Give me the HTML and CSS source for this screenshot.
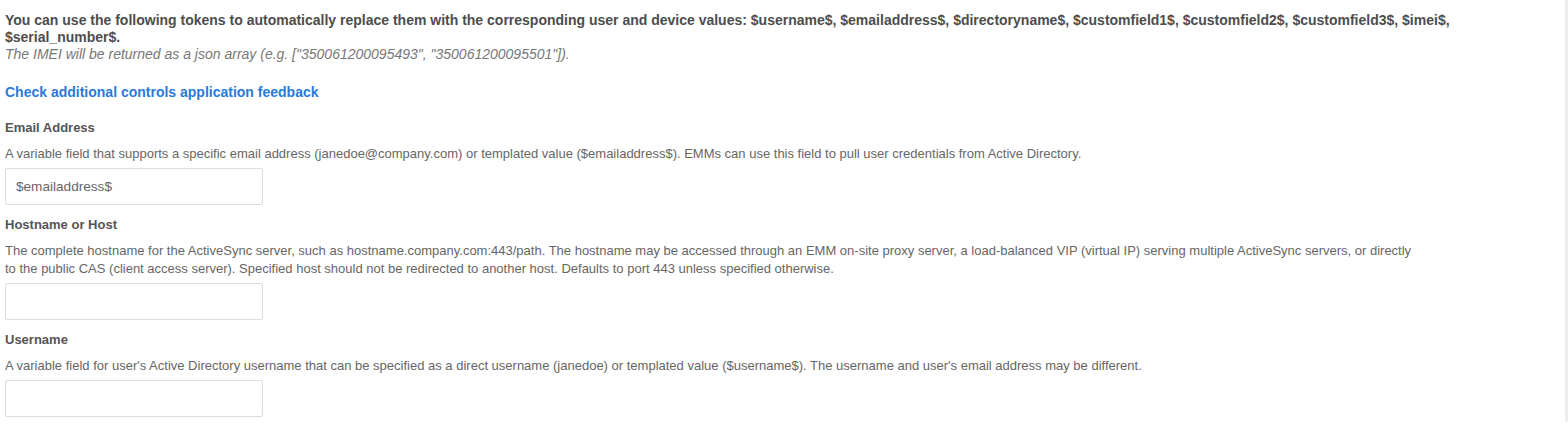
FILE: index.html
```html
<!DOCTYPE html>
<html lang="en">
<head>
<meta charset="utf-8">
<title>ActiveSync settings</title>
<link rel="stylesheet" href="styles.css">
</head>
<body>
<div class="page">
  <div class="intro">
    <p class="tokens">You can use the following tokens to automatically replace them with the corresponding user and device values: $username$, $emailaddress$, $directoryname$, $customfield1$, $customfield2$, $customfield3$, $imei$, $serial_number$.</p>
    <p class="note">The IMEI will be returned as a json array (e.g. ["350061200095493", "350061200095501"]).</p>
  </div>
  <a class="feedback" href="#">Check additional controls application feedback</a>

  <div class="field">
    <label class="field-label">Email Address</label>
    <p class="field-desc">A variable field that supports a specific email address (janedoe@company.com) or templated value ($emailaddress$). EMMs can use this field to pull user credentials from Active Directory.</p>
    <div class="input">$emailaddress$</div>
  </div>

  <div class="field">
    <label class="field-label">Hostname or Host</label>
    <p class="field-desc">The complete hostname for the ActiveSync server, such as hostname.company.com:443/path. The hostname may be accessed through an EMM on-site proxy server, a load-balanced VIP (virtual IP) serving multiple ActiveSync servers, or directly to the public CAS (client access server). Specified host should not be redirected to another host. Defaults to port 443 unless specified otherwise.</p>
    <div class="input"></div>
  </div>

  <div class="field">
    <label class="field-label">Username</label>
    <p class="field-desc">A variable field for user's Active Directory username that can be specified as a direct username (janedoe) or templated value ($username$). The username and user's email address may be different.</p>
    <div class="input"></div>
  </div>
</div>
</body>
</html>
```

FILE: styles.css
```css
html, body {
  margin: 0;
  padding: 0;
  background: #fff;
}

body {
  font-family: "Liberation Sans", Arial, sans-serif;
  color: #555;
  height: 425px;
  overflow: hidden;
}

.page {
  padding: 12px 5px 0 5px;
  border-right: 3px solid #ededed;
  height: 410px;
  box-sizing: content-box;
}

.intro {
  max-width: 1500px;
}

.tokens {
  margin: 0;
  font-size: 14px;
  font-weight: bold;
  line-height: 17px;
  color: #4d4d4d;
}

.note {
  margin: 0;
  font-size: 14px;
  font-style: italic;
  line-height: 17px;
  color: #777;
}

.feedback {
  display: block;
  margin-top: 21px;
  font-size: 14px;
  font-weight: bold;
  line-height: 17px;
  color: #2a7ad9;
  text-decoration: none;
}

.field {
  display: flex;
  flex-direction: column;
  align-items: flex-start;
  margin-top: 18px;
}

.field + .field {
  margin-top: 11px;
}

.field-label {
  font-size: 13px;
  font-weight: bold;
  line-height: 17px;
  color: #555;
}

.field-desc {
  margin: 9px 0 0 0;
  font-size: 13px;
  line-height: 18px;
  color: #666;
  max-width: 1408px;
}

.input {
  margin-top: 5px;
  width: 256px;
  height: 35px;
  border: 1px solid #dcdcdc;
  border-radius: 2px;
  box-sizing: content-box;
  font-size: 13.6px;
  line-height: 35px;
  text-indent: 10px;
  color: #666;
}
```
